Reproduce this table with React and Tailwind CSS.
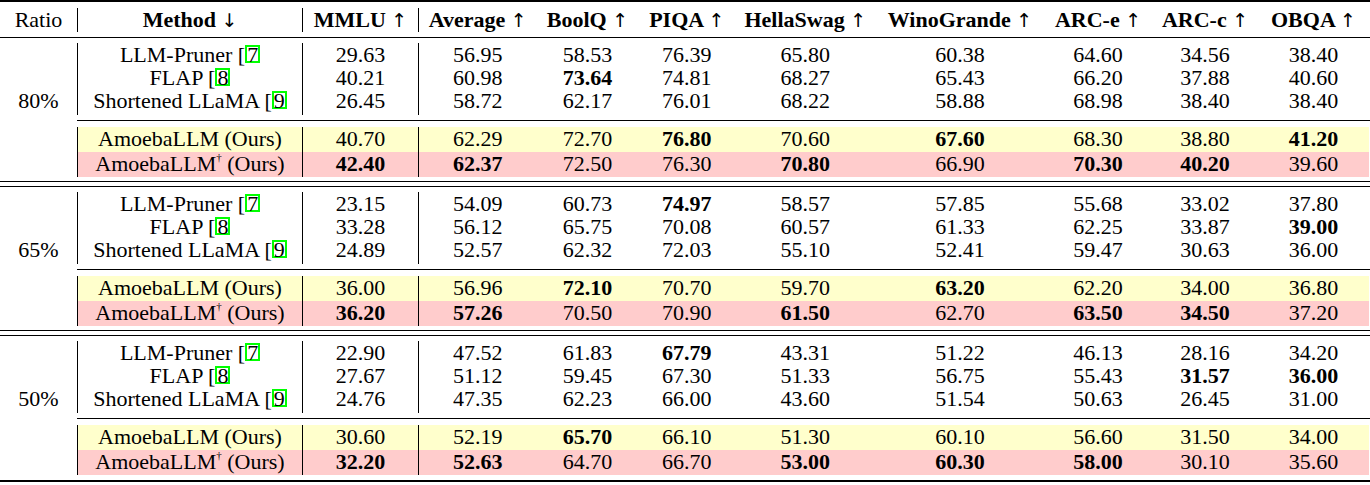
import React from 'react';

// Column grid shared by every row of the table
const cols =
  'grid grid-cols-[77px_225px_116px_118.5px_102px_96.5px_140.5px_169px_107px_107px_110px]';

const headers = ['MMLU', 'Average', 'BoolQ', 'PIQA', 'HellaSwag', 'WinoGrande', 'ARC-e', 'ARC-c', 'OBQA'];

const sections = [
  {
    ratio: '80%',
    base: [
      ['LLM-Pruner', '7', ['29.63', '56.95', '58.53', '76.39', '65.80', '60.38', '64.60', '34.56', '38.40']],
      ['FLAP', '8', ['40.21', '60.98', '*73.64', '74.81', '68.27', '65.43', '66.20', '37.88', '40.60']],
      ['Shortened LLaMA', '9', ['26.45', '58.72', '62.17', '76.01', '68.22', '58.88', '68.98', '38.40', '38.40']],
    ],
    ours: ['40.70', '62.29', '72.70', '*76.80', '70.60', '*67.60', '68.30', '38.80', '*41.20'],
    oursPlus: ['*42.40', '*62.37', '72.50', '76.30', '*70.80', '66.90', '*70.30', '*40.20', '39.60'],
  },
  {
    ratio: '65%',
    base: [
      ['LLM-Pruner', '7', ['23.15', '54.09', '60.73', '*74.97', '58.57', '57.85', '55.68', '33.02', '37.80']],
      ['FLAP', '8', ['33.28', '56.12', '65.75', '70.08', '60.57', '61.33', '62.25', '33.87', '*39.00']],
      ['Shortened LLaMA', '9', ['24.89', '52.57', '62.32', '72.03', '55.10', '52.41', '59.47', '30.63', '36.00']],
    ],
    ours: ['36.00', '56.96', '*72.10', '70.70', '59.70', '*63.20', '62.20', '34.00', '36.80'],
    oursPlus: ['*36.20', '*57.26', '70.50', '70.90', '*61.50', '62.70', '*63.50', '*34.50', '37.20'],
  },
  {
    ratio: '50%',
    base: [
      ['LLM-Pruner', '7', ['22.90', '47.52', '61.83', '*67.79', '43.31', '51.22', '46.13', '28.16', '34.20']],
      ['FLAP', '8', ['27.67', '51.12', '59.45', '67.30', '51.33', '56.75', '55.43', '*31.57', '*36.00']],
      ['Shortened LLaMA', '9', ['24.76', '47.35', '62.23', '66.00', '43.60', '51.54', '50.63', '26.45', '31.00']],
    ],
    ours: ['30.60', '52.19', '*65.70', '66.10', '51.30', '60.10', '56.60', '31.50', '34.00'],
    oursPlus: ['*32.20', '*52.63', '64.70', '66.70', '*53.00', '*60.30', '*58.00', '30.10', '35.60'],
  },
];

const Num = ({ v }) =>
  v.startsWith('*') ? <span className="font-bold">{v.slice(1)}</span> : <span>{v}</span>;

// citation link box, hyperref style
const Cite = ({ n }) => (
  <>
    {' ['}
    <span className="inline-block h-[18px] border-2 border-[#00ff00] leading-[16px]">{n}</span>
  </>
);

// math-style arrow next to header labels
const Arrow = ({ up }) => (
  <span className="font-normal font-['DejaVu_Sans',sans-serif] text-[19px]">{up ? '↑' : '↓'}</span>
);

// bars sit on the left edge of Method, MMLU and Average
const bar = (i) => (i >= 1 && i <= 3 ? 'border-l border-black' : '');

function BaseRow({ ratio, name, cite, values }) {
  const cells = [ratio, <>{name}<Cite n={cite} /></>, ...values.map((v) => <Num v={v} />)];
  return (
    <div className={cols}>
      {cells.map((c, i) => (
        <div key={i} className={`h-[23px] text-center whitespace-nowrap ${bar(i)}`}>
          {c}
        </div>
      ))}
    </div>
  );
}

function OursRow({ dagger, values, bg }) {
  const name = (
    <>
      AmoebaLLM{dagger && <span className="relative top-[-10px] text-[11px]">†</span>} (Ours)
    </>
  );
  const cells = ['', name, ...values.map((v) => <Num v={v} />)];
  return (
    <div className={cols}>
      {cells.map((c, i) => (
        <div key={i} className={`h-[25px] text-center whitespace-nowrap ${i > 0 ? bg : ''} ${bar(i)}`}>
          {c}
        </div>
      ))}
    </div>
  );
}

function Section({ s, last }) {
  return (
    <>
      <div className="pt-[5px]">
        {s.base.map(([name, cite, values], r) => (
          <BaseRow key={r} ratio={r === 2 ? s.ratio : ''} name={name} cite={cite} values={values} />
        ))}
        <div className={cols}>
          {Array.from({ length: 11 }).map((_, i) => (
            <div key={i} className={`h-[3px] ${bar(i)}`} />
          ))}
        </div>
      </div>
      <div className="ml-[77px] mt-[5px] mb-[6px] h-px bg-black" />
      <OursRow values={s.ours} bg="bg-[#ffffcc]" />
      <OursRow dagger values={s.oursPlus} bg="bg-[#ffcccc]" />
      {last ? (
        <div className="mt-[5px] h-[2px] bg-black" />
      ) : (
        <>
          <div className="mt-[4px] h-px bg-black" />
          <div className="mt-[4px] h-px bg-black" />
        </>
      )}
    </>
  );
}

export default function App() {
  return (
    <div className="w-[1370px] h-[485px] bg-white text-black font-['Liberation_Serif','Times_New_Roman',serif] text-[22px] leading-[23px]">
      <div className="h-[2px] bg-black" />
      <div className={`${cols} pt-[6px] pb-[5px]`}>
        <div className="h-[24px] text-center">Ratio</div>
        <div className={`h-[24px] text-center font-bold ${bar(1)}`}>
          Method <Arrow />
        </div>
        {headers.map((h, i) => (
          <div key={h} className={`h-[24px] text-center font-bold whitespace-nowrap ${bar(i + 2)}`}>
            {h} <Arrow up />
          </div>
        ))}
      </div>
      <div className="h-px bg-black" />
      {sections.map((s, i) => (
        <Section key={s.ratio} s={s} last={i === sections.length - 1} />
      ))}
    </div>
  );
}
